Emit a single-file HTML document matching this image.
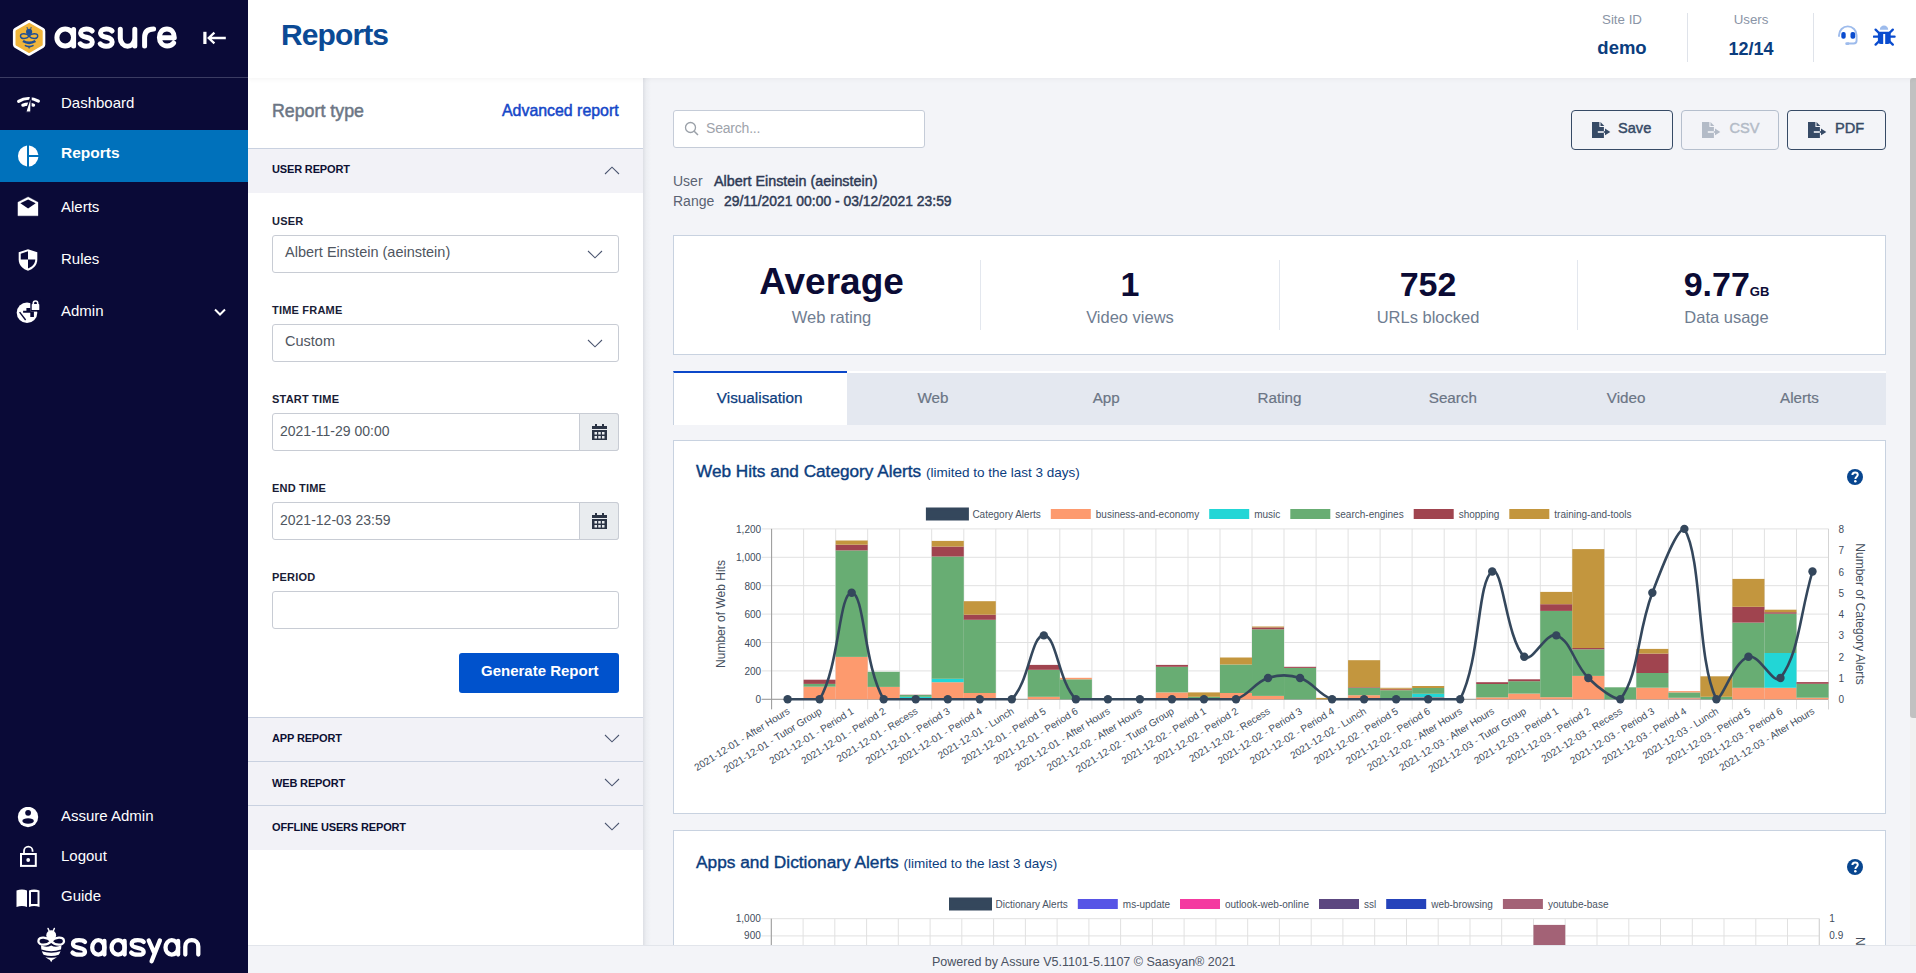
<!DOCTYPE html>
<html><head><meta charset="utf-8"><title>Reports</title>
<style>
*{box-sizing:border-box;margin:0;padding:0}
html,body{width:1916px;height:973px;overflow:hidden;background:#f3f4f8;font-family:"Liberation Sans",sans-serif;position:relative}
.a{position:absolute;white-space:nowrap}
#sb{position:absolute;left:0;top:0;width:248px;height:973px;background:#0a0a37}
.nav{position:absolute;left:0;width:248px;height:52px;color:#fff;font-size:15px}
.nav .t{position:absolute;left:61px;top:16px;line-height:18px}
.nav svg{position:absolute}
#hdr{position:absolute;left:248px;top:0;width:1668px;height:78px;background:#fff;box-shadow:0 1px 5px rgba(0,0,0,0.05)}
#lp{position:absolute;left:248px;top:78px;width:395px;height:867px;background:#fff}
#lpb{position:absolute;left:643px;top:78px;width:8px;height:867px;background:linear-gradient(to right,#dddfe5,#eceef2 40%,#f3f4f8)}
.acc{position:absolute;left:248px;width:395px;height:44px;background:#f2f2f7;border-top:1px solid #c9d1e0}
.acc .t{position:absolute;left:24px;top:13px;font-size:11px;font-weight:bold;color:#0d1033;line-height:14px;letter-spacing:-0.15px}
.lbl{position:absolute;left:272px;font-size:11px;font-weight:bold;color:#1a1d36;line-height:14px;letter-spacing:0.2px}
.inp{position:absolute;left:272px;width:347px;height:38px;background:#fff;border:1px solid #c8ccd4;border-radius:3px}
.inp .t{position:absolute;left:12px;top:8px;font-size:14.5px;color:#4f5661;line-height:17px}
.addon{position:absolute;right:-1px;top:-1px;width:40px;height:38px;background:#e9ecef;border:1px solid #c8ccd4;border-radius:0 3px 3px 0}
.btn{position:absolute;top:110px;height:40px;border:1.5px solid #364a66;border-radius:4px;background:#f3f4f8;color:#364a66;font-size:14.6px;-webkit-text-stroke:0.45px currentColor}
.btn .t{position:absolute;top:9px;line-height:17px}
.card{position:absolute;left:673px;width:1213px;background:#fff;border:1px solid #c8d2e0}
.sv{position:absolute;font-weight:bold;color:#0b0b35;text-align:center;line-height:40px}
.sl{position:absolute;font-size:16.5px;color:#6f7d91;text-align:center;line-height:20px}
.tab{position:absolute;top:373px;height:52px;width:173.3px;text-align:center;font-size:15.2px;color:#6b7585;line-height:18px;padding-top:16px;-webkit-text-stroke:0.2px #6b7585}
svg text.tk{font-family:"Liberation Sans",sans-serif;font-size:10px;fill:#414c5c}
svg text.at{font-family:"Liberation Sans",sans-serif;font-size:12px;fill:#454f5e}
svg text.lg{font-family:"Liberation Sans",sans-serif;font-size:10px;fill:#4a5464}
</style></head><body>

<!-- content area -->
<div class="a" style="left:646px;top:78px;width:1264px;height:867px;background:#f3f4f8"></div>

<!-- search -->
<div class="a" style="left:673px;top:110px;width:252px;height:38px;background:#fff;border:1px solid #c5ccd8;border-radius:3px">
 <svg class="a" style="left:10px;top:10px" width="16" height="16" viewBox="0 0 16 16"><circle cx="6.5" cy="6.5" r="5" fill="none" stroke="#9aa0a8" stroke-width="1.3"/><line x1="10.2" y1="10.2" x2="14" y2="14" stroke="#9aa0a8" stroke-width="1.5"/></svg>
 <div class="a" style="left:32px;top:9px;font-size:14px;color:#9ea3ab;line-height:17px;letter-spacing:-0.2px">Search...</div>
</div>

<!-- buttons -->
<div class="btn" style="left:1571px;width:102px">
 <svg class="a" style="left:19.5px;top:10.5px" width="20" height="17" viewBox="0 0 20 17"><path d="M0 0H7.4V5.1H11.9V15.9H0Z" fill="#364a66"/><path d="M8.5 0L12.3 3.9H8.5Z" fill="#364a66"/><rect x="5.8" y="9.2" width="6.1" height="1.6" fill="#f3f4f8"/><rect x="11.9" y="9.2" width="2.6" height="1.6" fill="#364a66"/><path d="M13 6.6L18.3 10L13 13.3Z" fill="#364a66"/></svg>
 <div class="t" style="left:46px">Save</div>
</div>
<div class="btn" style="left:1681px;width:98px;border-color:#b5bfcd;color:#b3bbc7">
 <svg class="a" style="left:19.5px;top:10.5px" width="20" height="17" viewBox="0 0 20 17"><path d="M0 0H7.4V5.1H11.9V15.9H0Z" fill="#b3bbc7"/><path d="M8.5 0L12.3 3.9H8.5Z" fill="#b3bbc7"/><rect x="5.8" y="9.2" width="6.1" height="1.6" fill="#f3f4f8"/><rect x="11.9" y="9.2" width="2.6" height="1.6" fill="#b3bbc7"/><path d="M13 6.6L18.3 10L13 13.3Z" fill="#b3bbc7"/></svg>
 <div class="t" style="left:47.5px">CSV</div>
</div>
<div class="btn" style="left:1787px;width:99px">
 <svg class="a" style="left:19.5px;top:10.5px" width="20" height="17" viewBox="0 0 20 17"><path d="M0 0H7.4V5.1H11.9V15.9H0Z" fill="#364a66"/><path d="M8.5 0L12.3 3.9H8.5Z" fill="#364a66"/><rect x="5.8" y="9.2" width="6.1" height="1.6" fill="#f3f4f8"/><rect x="11.9" y="9.2" width="2.6" height="1.6" fill="#364a66"/><path d="M13 6.6L18.3 10L13 13.3Z" fill="#364a66"/></svg>
 <div class="t" style="left:47px">PDF</div>
</div>

<!-- user / range -->
<div class="a" style="left:673px;top:173px;font-size:14px;color:#5a6272;line-height:17px">User</div>
<div class="a" style="left:714px;top:172.5px;font-size:14.35px;color:#2e3a55;line-height:17px;-webkit-text-stroke:0.45px #2e3a55">Albert Einstein (aeinstein)</div>
<div class="a" style="left:673px;top:193px;font-size:14px;color:#5a6272;line-height:17px">Range</div>
<div class="a" style="left:724px;top:193px;font-size:13.9px;color:#2e3a55;line-height:17px;-webkit-text-stroke:0.45px #2e3a55">29/11/2021 00:00 - 03/12/2021 23:59</div>

<!-- stats card -->
<div class="card" style="top:235px;height:120px"></div>
<div class="a" style="left:980px;top:260px;width:1px;height:70px;background:#e3e7ee"></div>
<div class="a" style="left:1279px;top:260px;width:1px;height:70px;background:#e3e7ee"></div>
<div class="a" style="left:1577px;top:260px;width:1px;height:70px;background:#e3e7ee"></div>
<div class="sv" style="left:682px;width:299px;top:262px;font-size:37px">Average</div>
<div class="sv" style="left:981px;width:298px;top:264px;font-size:34px">1</div>
<div class="sv" style="left:1279px;width:298px;top:264px;font-size:34px">752</div>
<div class="sv" style="left:1577px;width:299px;top:264px;font-size:34px">9.77<span style="font-size:13px;line-height:13px">GB</span></div>
<div class="sl" style="left:682px;width:299px;top:307px">Web rating</div>
<div class="sl" style="left:981px;width:298px;top:307px">Video views</div>
<div class="sl" style="left:1279px;width:298px;top:307px">URLs blocked</div>
<div class="sl" style="left:1577px;width:299px;top:307px">Data usage</div>

<!-- tabs -->
<div class="a" style="left:673px;top:371px;width:1213px;height:54px;background:#e4e8f0;border-top:2px solid #fff"></div>
<div class="a" style="left:673px;top:371px;width:174px;height:54px;background:#fff;border-top:2px solid #0b47c9;border-left:1px solid #c8d2e0"></div>
<div class="tab" style="left:673px;color:#0b3d7e;font-size:15.3px;-webkit-text-stroke:0.25px #0b3d7e">Visualisation</div>
<div class="tab" style="left:846.3px">Web</div>
<div class="tab" style="left:1019.6px">App</div>
<div class="tab" style="left:1192.9px">Rating</div>
<div class="tab" style="left:1366.2px">Search</div>
<div class="tab" style="left:1539.5px">Video</div>
<div class="tab" style="left:1712.8px">Alerts</div>

<!-- chart cards -->
<div class="card" style="top:440px;height:374px"></div>
<div class="card" style="top:830px;height:200px"></div>
<div class="a" style="left:696px;top:461px;font-size:17.2px;color:#0b3d7e;line-height:20px;-webkit-text-stroke:0.4px #0b3d7e">Web Hits and Category Alerts <span style="font-size:13.5px;-webkit-text-stroke:0">(limited to the last 3 days)</span></div>
<div class="a" style="left:696px;top:852px;font-size:17.3px;color:#0b3d7e;line-height:20px;-webkit-text-stroke:0.4px #0b3d7e">Apps and Dictionary Alerts <span style="font-size:13.5px;-webkit-text-stroke:0">(limited to the last 3 days)</span></div>
<svg class="a" style="left:1847px;top:469px" width="16" height="16" viewBox="0 0 16 16"><circle cx="8" cy="8" r="8" fill="#08468f"/><path d="M5.4 6.1C5.4 4.4 6.5 3.4 8.1 3.4C9.7 3.4 10.8 4.4 10.8 5.8C10.8 7.7 8.4 7.8 8.4 9.9" fill="none" stroke="#fff" stroke-width="2"/><circle cx="8.3" cy="12.3" r="1.25" fill="#fff"/></svg>
<svg class="a" style="left:1847px;top:859px" width="16" height="16" viewBox="0 0 16 16"><circle cx="8" cy="8" r="8" fill="#08468f"/><path d="M5.4 6.1C5.4 4.4 6.5 3.4 8.1 3.4C9.7 3.4 10.8 4.4 10.8 5.8C10.8 7.7 8.4 7.8 8.4 9.9" fill="none" stroke="#fff" stroke-width="2"/><circle cx="8.3" cy="12.3" r="1.25" fill="#fff"/></svg>

<svg class="a" style="left:0;top:0" width="1916" height="973" viewBox="0 0 1916 973">
<line x1="761.6" y1="699.3" x2="1828.5" y2="699.3" stroke="#e1e1e1" stroke-width="1"/>
<line x1="761.6" y1="670.9" x2="1828.5" y2="670.9" stroke="#e1e1e1" stroke-width="1"/>
<line x1="761.6" y1="642.5" x2="1828.5" y2="642.5" stroke="#e1e1e1" stroke-width="1"/>
<line x1="761.6" y1="614.1" x2="1828.5" y2="614.1" stroke="#e1e1e1" stroke-width="1"/>
<line x1="761.6" y1="585.7" x2="1828.5" y2="585.7" stroke="#e1e1e1" stroke-width="1"/>
<line x1="761.6" y1="557.3" x2="1828.5" y2="557.3" stroke="#e1e1e1" stroke-width="1"/>
<line x1="761.6" y1="528.9" x2="1828.5" y2="528.9" stroke="#e1e1e1" stroke-width="1"/>
<line x1="771.6" y1="528.9" x2="771.6" y2="709.3" stroke="#e1e1e1" stroke-width="1"/>
<line x1="803.6" y1="528.9" x2="803.6" y2="709.3" stroke="#e1e1e1" stroke-width="1"/>
<line x1="835.7" y1="528.9" x2="835.7" y2="709.3" stroke="#e1e1e1" stroke-width="1"/>
<line x1="867.7" y1="528.9" x2="867.7" y2="709.3" stroke="#e1e1e1" stroke-width="1"/>
<line x1="899.7" y1="528.9" x2="899.7" y2="709.3" stroke="#e1e1e1" stroke-width="1"/>
<line x1="931.7" y1="528.9" x2="931.7" y2="709.3" stroke="#e1e1e1" stroke-width="1"/>
<line x1="963.8" y1="528.9" x2="963.8" y2="709.3" stroke="#e1e1e1" stroke-width="1"/>
<line x1="995.8" y1="528.9" x2="995.8" y2="709.3" stroke="#e1e1e1" stroke-width="1"/>
<line x1="1027.8" y1="528.9" x2="1027.8" y2="709.3" stroke="#e1e1e1" stroke-width="1"/>
<line x1="1059.8" y1="528.9" x2="1059.8" y2="709.3" stroke="#e1e1e1" stroke-width="1"/>
<line x1="1091.9" y1="528.9" x2="1091.9" y2="709.3" stroke="#e1e1e1" stroke-width="1"/>
<line x1="1123.9" y1="528.9" x2="1123.9" y2="709.3" stroke="#e1e1e1" stroke-width="1"/>
<line x1="1155.9" y1="528.9" x2="1155.9" y2="709.3" stroke="#e1e1e1" stroke-width="1"/>
<line x1="1188.0" y1="528.9" x2="1188.0" y2="709.3" stroke="#e1e1e1" stroke-width="1"/>
<line x1="1220.0" y1="528.9" x2="1220.0" y2="709.3" stroke="#e1e1e1" stroke-width="1"/>
<line x1="1252.0" y1="528.9" x2="1252.0" y2="709.3" stroke="#e1e1e1" stroke-width="1"/>
<line x1="1284.0" y1="528.9" x2="1284.0" y2="709.3" stroke="#e1e1e1" stroke-width="1"/>
<line x1="1316.1" y1="528.9" x2="1316.1" y2="709.3" stroke="#e1e1e1" stroke-width="1"/>
<line x1="1348.1" y1="528.9" x2="1348.1" y2="709.3" stroke="#e1e1e1" stroke-width="1"/>
<line x1="1380.1" y1="528.9" x2="1380.1" y2="709.3" stroke="#e1e1e1" stroke-width="1"/>
<line x1="1412.1" y1="528.9" x2="1412.1" y2="709.3" stroke="#e1e1e1" stroke-width="1"/>
<line x1="1444.2" y1="528.9" x2="1444.2" y2="709.3" stroke="#e1e1e1" stroke-width="1"/>
<line x1="1476.2" y1="528.9" x2="1476.2" y2="709.3" stroke="#e1e1e1" stroke-width="1"/>
<line x1="1508.2" y1="528.9" x2="1508.2" y2="709.3" stroke="#e1e1e1" stroke-width="1"/>
<line x1="1540.3" y1="528.9" x2="1540.3" y2="709.3" stroke="#e1e1e1" stroke-width="1"/>
<line x1="1572.3" y1="528.9" x2="1572.3" y2="709.3" stroke="#e1e1e1" stroke-width="1"/>
<line x1="1604.3" y1="528.9" x2="1604.3" y2="709.3" stroke="#e1e1e1" stroke-width="1"/>
<line x1="1636.3" y1="528.9" x2="1636.3" y2="709.3" stroke="#e1e1e1" stroke-width="1"/>
<line x1="1668.4" y1="528.9" x2="1668.4" y2="709.3" stroke="#e1e1e1" stroke-width="1"/>
<line x1="1700.4" y1="528.9" x2="1700.4" y2="709.3" stroke="#e1e1e1" stroke-width="1"/>
<line x1="1732.4" y1="528.9" x2="1732.4" y2="709.3" stroke="#e1e1e1" stroke-width="1"/>
<line x1="1764.4" y1="528.9" x2="1764.4" y2="709.3" stroke="#e1e1e1" stroke-width="1"/>
<line x1="1796.5" y1="528.9" x2="1796.5" y2="709.3" stroke="#e1e1e1" stroke-width="1"/>
<line x1="1828.5" y1="528.9" x2="1828.5" y2="709.3" stroke="#e1e1e1" stroke-width="1"/>
<line x1="771.6" y1="528.9" x2="771.6" y2="709.3" stroke="#9a9a9a" stroke-width="1"/>
<line x1="761.6" y1="699.3" x2="1828.5" y2="699.3" stroke="#9a9a9a" stroke-width="1"/>
<line x1="1828.5" y1="528.9" x2="1828.5" y2="709.3" stroke="#d5d5d5" stroke-width="1"/>
<rect x="803.63" y="686.70" width="32.03" height="12.60" fill="#fd9a6e"/>
<rect x="803.63" y="683.90" width="32.03" height="2.80" fill="#68ad73"/>
<rect x="803.63" y="679.70" width="32.03" height="4.20" fill="#a0444f"/>
<rect x="835.65" y="656.90" width="32.03" height="42.40" fill="#fd9a6e"/>
<rect x="835.65" y="550.40" width="32.03" height="106.50" fill="#68ad73"/>
<rect x="835.65" y="544.70" width="32.03" height="5.70" fill="#a0444f"/>
<rect x="835.65" y="540.50" width="32.03" height="4.20" fill="#c3963e"/>
<rect x="867.68" y="686.90" width="32.03" height="12.40" fill="#fd9a6e"/>
<rect x="867.68" y="671.80" width="32.03" height="15.10" fill="#68ad73"/>
<rect x="899.71" y="696.80" width="32.03" height="2.50" fill="#22d6d6"/>
<rect x="899.71" y="694.80" width="32.03" height="2.00" fill="#68ad73"/>
<rect x="899.71" y="694.30" width="32.03" height="0.50" fill="#e9b5c0"/>
<rect x="931.74" y="682.20" width="32.03" height="17.10" fill="#fd9a6e"/>
<rect x="931.74" y="678.80" width="32.03" height="3.40" fill="#22d6d6"/>
<rect x="931.74" y="556.50" width="32.03" height="122.30" fill="#68ad73"/>
<rect x="931.74" y="546.60" width="32.03" height="9.90" fill="#a0444f"/>
<rect x="931.74" y="540.90" width="32.03" height="5.70" fill="#c3963e"/>
<rect x="963.76" y="693.00" width="32.03" height="6.30" fill="#fd9a6e"/>
<rect x="963.76" y="619.80" width="32.03" height="73.20" fill="#68ad73"/>
<rect x="963.76" y="614.70" width="32.03" height="5.10" fill="#a0444f"/>
<rect x="963.76" y="601.20" width="32.03" height="13.50" fill="#c3963e"/>
<rect x="1027.82" y="696.80" width="32.03" height="2.50" fill="#fd9a6e"/>
<rect x="1027.82" y="669.80" width="32.03" height="27.00" fill="#68ad73"/>
<rect x="1027.82" y="664.90" width="32.03" height="4.90" fill="#a0444f"/>
<rect x="1059.85" y="679.30" width="32.03" height="20.00" fill="#68ad73"/>
<rect x="1059.85" y="677.80" width="32.03" height="1.50" fill="#fd9a6e"/>
<rect x="1155.93" y="692.40" width="32.03" height="6.90" fill="#fd9a6e"/>
<rect x="1155.93" y="666.80" width="32.03" height="25.60" fill="#68ad73"/>
<rect x="1155.93" y="664.90" width="32.03" height="1.90" fill="#a0444f"/>
<rect x="1187.95" y="696.80" width="32.03" height="2.50" fill="#68ad73"/>
<rect x="1187.95" y="692.40" width="32.03" height="4.40" fill="#c3963e"/>
<rect x="1219.98" y="693.00" width="32.03" height="6.30" fill="#fd9a6e"/>
<rect x="1219.98" y="664.50" width="32.03" height="28.50" fill="#68ad73"/>
<rect x="1219.98" y="657.50" width="32.03" height="7.00" fill="#c3963e"/>
<rect x="1252.01" y="695.90" width="32.03" height="3.40" fill="#fd9a6e"/>
<rect x="1252.01" y="629.30" width="32.03" height="66.60" fill="#68ad73"/>
<rect x="1252.01" y="627.40" width="32.03" height="1.90" fill="#a0444f"/>
<rect x="1252.01" y="626.50" width="32.03" height="0.90" fill="#c3963e"/>
<rect x="1284.04" y="667.90" width="32.03" height="31.40" fill="#68ad73"/>
<rect x="1284.04" y="666.80" width="32.03" height="1.10" fill="#a0444f"/>
<rect x="1316.06" y="697.90" width="32.03" height="1.40" fill="#c3963e"/>
<rect x="1348.09" y="695.20" width="32.03" height="4.10" fill="#fd9a6e"/>
<rect x="1348.09" y="688.00" width="32.03" height="7.20" fill="#68ad73"/>
<rect x="1348.09" y="687.30" width="32.03" height="0.70" fill="#a0444f"/>
<rect x="1348.09" y="660.20" width="32.03" height="27.10" fill="#c3963e"/>
<rect x="1380.12" y="690.20" width="32.03" height="9.10" fill="#68ad73"/>
<rect x="1380.12" y="688.70" width="32.03" height="1.50" fill="#c0745a"/>
<rect x="1380.12" y="687.80" width="32.03" height="0.90" fill="#c3963e"/>
<rect x="1412.15" y="697.30" width="32.03" height="2.00" fill="#a0444f"/>
<rect x="1412.15" y="693.80" width="32.03" height="3.50" fill="#22d6d6"/>
<rect x="1412.15" y="688.00" width="32.03" height="5.80" fill="#68ad73"/>
<rect x="1412.15" y="686.00" width="32.03" height="2.00" fill="#c3963e"/>
<rect x="1476.20" y="697.40" width="32.03" height="1.90" fill="#fd9a6e"/>
<rect x="1476.20" y="684.00" width="32.03" height="13.40" fill="#68ad73"/>
<rect x="1476.20" y="682.20" width="32.03" height="1.80" fill="#a0444f"/>
<rect x="1508.23" y="693.60" width="32.03" height="5.70" fill="#fd9a6e"/>
<rect x="1508.23" y="681.20" width="32.03" height="12.40" fill="#68ad73"/>
<rect x="1508.23" y="679.30" width="32.03" height="1.90" fill="#a0444f"/>
<rect x="1540.25" y="697.20" width="32.03" height="2.10" fill="#fd9a6e"/>
<rect x="1540.25" y="610.90" width="32.03" height="86.30" fill="#68ad73"/>
<rect x="1540.25" y="604.20" width="32.03" height="6.70" fill="#a0444f"/>
<rect x="1540.25" y="591.90" width="32.03" height="12.30" fill="#c3963e"/>
<rect x="1572.28" y="675.90" width="32.03" height="23.40" fill="#fd9a6e"/>
<rect x="1572.28" y="649.30" width="32.03" height="26.60" fill="#68ad73"/>
<rect x="1572.28" y="648.00" width="32.03" height="1.30" fill="#a0444f"/>
<rect x="1572.28" y="549.10" width="32.03" height="98.90" fill="#c3963e"/>
<rect x="1604.31" y="687.30" width="32.03" height="12.00" fill="#68ad73"/>
<rect x="1636.34" y="687.70" width="32.03" height="11.60" fill="#fd9a6e"/>
<rect x="1636.34" y="673.00" width="32.03" height="14.70" fill="#68ad73"/>
<rect x="1636.34" y="653.60" width="32.03" height="19.40" fill="#a0444f"/>
<rect x="1636.34" y="648.90" width="32.03" height="4.70" fill="#c3963e"/>
<rect x="1668.36" y="697.80" width="32.03" height="1.50" fill="#e3a08c"/>
<rect x="1668.36" y="692.40" width="32.03" height="5.40" fill="#68ad73"/>
<rect x="1668.36" y="691.10" width="32.03" height="1.30" fill="#fd9a6e"/>
<rect x="1700.39" y="696.80" width="32.03" height="2.50" fill="#68ad73"/>
<rect x="1700.39" y="676.30" width="32.03" height="20.50" fill="#c3963e"/>
<rect x="1732.42" y="687.80" width="32.03" height="11.50" fill="#fd9a6e"/>
<rect x="1732.42" y="622.60" width="32.03" height="65.20" fill="#68ad73"/>
<rect x="1732.42" y="606.80" width="32.03" height="15.80" fill="#a0444f"/>
<rect x="1732.42" y="578.90" width="32.03" height="27.90" fill="#c3963e"/>
<rect x="1764.45" y="687.80" width="32.03" height="11.50" fill="#fd9a6e"/>
<rect x="1764.45" y="653.00" width="32.03" height="34.80" fill="#22d6d6"/>
<rect x="1764.45" y="613.70" width="32.03" height="39.30" fill="#68ad73"/>
<rect x="1764.45" y="612.20" width="32.03" height="1.50" fill="#a0444f"/>
<rect x="1764.45" y="609.70" width="32.03" height="2.50" fill="#c3963e"/>
<rect x="1796.47" y="697.70" width="32.03" height="1.60" fill="#fd9a6e"/>
<rect x="1796.47" y="683.80" width="32.03" height="13.90" fill="#68ad73"/>
<rect x="1796.47" y="682.10" width="32.03" height="1.70" fill="#a0444f"/>
<path d="M787.61,699.30 C800.42,699.30 813.91,699.30 819.64,699.30 C839.53,666.23 838.86,592.80 851.67,592.80 C864.48,592.80 863.80,666.23 883.70,699.30 C889.42,699.30 902.91,699.30 915.72,699.30 C928.53,699.30 934.94,699.30 947.75,699.30 C960.56,699.30 966.97,699.30 979.78,699.30 C992.59,699.30 1003.88,699.30 1011.80,699.30 C1029.50,681.65 1031.02,635.40 1043.83,635.40 C1056.64,635.40 1058.17,681.65 1075.86,699.30 C1083.79,699.30 1095.08,699.30 1107.89,699.30 C1120.70,699.30 1127.10,699.30 1139.91,699.30 C1152.72,699.30 1159.13,699.30 1171.94,699.30 C1184.75,699.30 1191.16,699.30 1203.97,699.30 C1216.78,699.30 1224.35,699.30 1236.00,699.30 C1249.98,694.65 1254.04,682.65 1268.02,678.00 C1279.66,674.13 1288.41,674.13 1300.05,678.00 C1314.03,682.65 1318.10,694.65 1332.08,699.30 C1343.72,699.30 1351.29,699.30 1364.10,699.30 C1376.92,699.30 1383.32,699.30 1396.13,699.30 C1408.94,699.30 1415.35,699.30 1428.16,699.30 C1440.97,699.30 1455.18,699.30 1460.19,699.30 C1480.80,658.18 1477.06,581.58 1492.21,571.50 C1502.68,564.54 1506.23,638.73 1524.24,656.70 C1531.85,664.29 1545.53,631.83 1556.27,635.40 C1571.15,640.35 1573.41,663.15 1588.30,678.00 C1599.04,688.71 1613.74,699.30 1620.32,699.30 C1639.36,673.98 1636.75,634.29 1652.35,592.80 C1662.37,566.13 1676.90,528.90 1684.38,528.90 C1702.52,559.06 1696.81,660.20 1716.40,699.30 C1722.43,699.30 1733.55,661.65 1748.43,656.70 C1759.17,653.13 1773.87,686.76 1780.46,678.00 C1799.50,652.68 1799.68,614.10 1812.49,571.50" fill="none" stroke="#34475c" stroke-width="2.6"/>
<circle cx="787.61" cy="699.30" r="4.2" fill="#34475c"/>
<circle cx="819.64" cy="699.30" r="4.2" fill="#34475c"/>
<circle cx="851.67" cy="592.80" r="4.2" fill="#34475c"/>
<circle cx="883.70" cy="699.30" r="4.2" fill="#34475c"/>
<circle cx="915.72" cy="699.30" r="4.2" fill="#34475c"/>
<circle cx="947.75" cy="699.30" r="4.2" fill="#34475c"/>
<circle cx="979.78" cy="699.30" r="4.2" fill="#34475c"/>
<circle cx="1011.80" cy="699.30" r="4.2" fill="#34475c"/>
<circle cx="1043.83" cy="635.40" r="4.2" fill="#34475c"/>
<circle cx="1075.86" cy="699.30" r="4.2" fill="#34475c"/>
<circle cx="1107.89" cy="699.30" r="4.2" fill="#34475c"/>
<circle cx="1139.91" cy="699.30" r="4.2" fill="#34475c"/>
<circle cx="1171.94" cy="699.30" r="4.2" fill="#34475c"/>
<circle cx="1203.97" cy="699.30" r="4.2" fill="#34475c"/>
<circle cx="1236.00" cy="699.30" r="4.2" fill="#34475c"/>
<circle cx="1268.02" cy="678.00" r="4.2" fill="#34475c"/>
<circle cx="1300.05" cy="678.00" r="4.2" fill="#34475c"/>
<circle cx="1332.08" cy="699.30" r="4.2" fill="#34475c"/>
<circle cx="1364.10" cy="699.30" r="4.2" fill="#34475c"/>
<circle cx="1396.13" cy="699.30" r="4.2" fill="#34475c"/>
<circle cx="1428.16" cy="699.30" r="4.2" fill="#34475c"/>
<circle cx="1460.19" cy="699.30" r="4.2" fill="#34475c"/>
<circle cx="1492.21" cy="571.50" r="4.2" fill="#34475c"/>
<circle cx="1524.24" cy="656.70" r="4.2" fill="#34475c"/>
<circle cx="1556.27" cy="635.40" r="4.2" fill="#34475c"/>
<circle cx="1588.30" cy="678.00" r="4.2" fill="#34475c"/>
<circle cx="1620.32" cy="699.30" r="4.2" fill="#34475c"/>
<circle cx="1652.35" cy="592.80" r="4.2" fill="#34475c"/>
<circle cx="1684.38" cy="528.90" r="4.2" fill="#34475c"/>
<circle cx="1716.40" cy="699.30" r="4.2" fill="#34475c"/>
<circle cx="1748.43" cy="656.70" r="4.2" fill="#34475c"/>
<circle cx="1780.46" cy="678.00" r="4.2" fill="#34475c"/>
<circle cx="1812.49" cy="571.50" r="4.2" fill="#34475c"/>
<text x="761.1" y="703.3" text-anchor="end" class="tk">0</text>
<text x="761.1" y="674.9" text-anchor="end" class="tk">200</text>
<text x="761.1" y="646.5" text-anchor="end" class="tk">400</text>
<text x="761.1" y="618.1" text-anchor="end" class="tk">600</text>
<text x="761.1" y="589.7" text-anchor="end" class="tk">800</text>
<text x="761.1" y="561.3" text-anchor="end" class="tk">1,000</text>
<text x="761.1" y="532.9" text-anchor="end" class="tk">1,200</text>
<text x="1838.5" y="703.3" class="tk">0</text>
<text x="1838.5" y="682.0" class="tk">1</text>
<text x="1838.5" y="660.7" class="tk">2</text>
<text x="1838.5" y="639.4" class="tk">3</text>
<text x="1838.5" y="618.1" class="tk">4</text>
<text x="1838.5" y="596.8" class="tk">5</text>
<text x="1838.5" y="575.5" class="tk">6</text>
<text x="1838.5" y="554.2" class="tk">7</text>
<text x="1838.5" y="532.9" class="tk">8</text>
<text transform="translate(725,614) rotate(-90)" text-anchor="middle" class="at">Number of Web Hits</text>
<text transform="translate(1856,614) rotate(90)" text-anchor="middle" class="at">Number of Category Alerts</text>
<text transform="translate(788.6,710) rotate(-32)" text-anchor="end" dy="3.5" class="tk">2021-12-01 - After Hours</text>
<text transform="translate(820.6,710) rotate(-32)" text-anchor="end" dy="3.5" class="tk">2021-12-01 - Tutor Group</text>
<text transform="translate(852.7,710) rotate(-32)" text-anchor="end" dy="3.5" class="tk">2021-12-01 - Period 1</text>
<text transform="translate(884.7,710) rotate(-32)" text-anchor="end" dy="3.5" class="tk">2021-12-01 - Period 2</text>
<text transform="translate(916.7,710) rotate(-32)" text-anchor="end" dy="3.5" class="tk">2021-12-01 - Recess</text>
<text transform="translate(948.8,710) rotate(-32)" text-anchor="end" dy="3.5" class="tk">2021-12-01 - Period 3</text>
<text transform="translate(980.8,710) rotate(-32)" text-anchor="end" dy="3.5" class="tk">2021-12-01 - Period 4</text>
<text transform="translate(1012.8,710) rotate(-32)" text-anchor="end" dy="3.5" class="tk">2021-12-01 - Lunch</text>
<text transform="translate(1044.8,710) rotate(-32)" text-anchor="end" dy="3.5" class="tk">2021-12-01 - Period 5</text>
<text transform="translate(1076.9,710) rotate(-32)" text-anchor="end" dy="3.5" class="tk">2021-12-01 - Period 6</text>
<text transform="translate(1108.9,710) rotate(-32)" text-anchor="end" dy="3.5" class="tk">2021-12-01 - After Hours</text>
<text transform="translate(1140.9,710) rotate(-32)" text-anchor="end" dy="3.5" class="tk">2021-12-02 - After Hours</text>
<text transform="translate(1172.9,710) rotate(-32)" text-anchor="end" dy="3.5" class="tk">2021-12-02 - Tutor Group</text>
<text transform="translate(1205.0,710) rotate(-32)" text-anchor="end" dy="3.5" class="tk">2021-12-02 - Period 1</text>
<text transform="translate(1237.0,710) rotate(-32)" text-anchor="end" dy="3.5" class="tk">2021-12-02 - Period 2</text>
<text transform="translate(1269.0,710) rotate(-32)" text-anchor="end" dy="3.5" class="tk">2021-12-02 - Recess</text>
<text transform="translate(1301.1,710) rotate(-32)" text-anchor="end" dy="3.5" class="tk">2021-12-02 - Period 3</text>
<text transform="translate(1333.1,710) rotate(-32)" text-anchor="end" dy="3.5" class="tk">2021-12-02 - Period 4</text>
<text transform="translate(1365.1,710) rotate(-32)" text-anchor="end" dy="3.5" class="tk">2021-12-02 - Lunch</text>
<text transform="translate(1397.1,710) rotate(-32)" text-anchor="end" dy="3.5" class="tk">2021-12-02 - Period 5</text>
<text transform="translate(1429.2,710) rotate(-32)" text-anchor="end" dy="3.5" class="tk">2021-12-02 - Period 6</text>
<text transform="translate(1461.2,710) rotate(-32)" text-anchor="end" dy="3.5" class="tk">2021-12-02 - After Hours</text>
<text transform="translate(1493.2,710) rotate(-32)" text-anchor="end" dy="3.5" class="tk">2021-12-03 - After Hours</text>
<text transform="translate(1525.2,710) rotate(-32)" text-anchor="end" dy="3.5" class="tk">2021-12-03 - Tutor Group</text>
<text transform="translate(1557.3,710) rotate(-32)" text-anchor="end" dy="3.5" class="tk">2021-12-03 - Period 1</text>
<text transform="translate(1589.3,710) rotate(-32)" text-anchor="end" dy="3.5" class="tk">2021-12-03 - Period 2</text>
<text transform="translate(1621.3,710) rotate(-32)" text-anchor="end" dy="3.5" class="tk">2021-12-03 - Recess</text>
<text transform="translate(1653.4,710) rotate(-32)" text-anchor="end" dy="3.5" class="tk">2021-12-03 - Period 3</text>
<text transform="translate(1685.4,710) rotate(-32)" text-anchor="end" dy="3.5" class="tk">2021-12-03 - Period 4</text>
<text transform="translate(1717.4,710) rotate(-32)" text-anchor="end" dy="3.5" class="tk">2021-12-03 - Lunch</text>
<text transform="translate(1749.4,710) rotate(-32)" text-anchor="end" dy="3.5" class="tk">2021-12-03 - Period 5</text>
<text transform="translate(1781.5,710) rotate(-32)" text-anchor="end" dy="3.5" class="tk">2021-12-03 - Period 6</text>
<text transform="translate(1813.5,710) rotate(-32)" text-anchor="end" dy="3.5" class="tk">2021-12-03 - After Hours</text>
<rect x="927.4" y="509" width="40" height="10" fill="#34475c" stroke="#34475c" stroke-width="3"/>
<text x="972.4" y="517.5" class="lg">Category Alerts</text>
<rect x="1050.8" y="509" width="40" height="10" fill="#fd9a6e"/>
<text x="1095.8" y="517.5" class="lg">business-and-economy</text>
<rect x="1209.2" y="509" width="40" height="10" fill="#22d6d6"/>
<text x="1254.2" y="517.5" class="lg">music</text>
<rect x="1290.3" y="509" width="40" height="10" fill="#68ad73"/>
<text x="1335.3" y="517.5" class="lg">search-engines</text>
<rect x="1413.7" y="509" width="40" height="10" fill="#a0444f"/>
<text x="1458.7" y="517.5" class="lg">shopping</text>
<rect x="1509.3" y="509" width="40" height="10" fill="#c3963e"/>
<text x="1554.3" y="517.5" class="lg">training-and-tools</text>
<line x1="761.3" y1="918.7" x2="1819.3" y2="918.7" stroke="#e1e1e1"/>
<line x1="761.3" y1="935.9" x2="1819.3" y2="935.9" stroke="#e1e1e1"/>
<line x1="761.3" y1="953.1" x2="1819.3" y2="953.1" stroke="#e1e1e1"/>
<line x1="761.3" y1="970.3" x2="1819.3" y2="970.3" stroke="#e1e1e1"/>
<line x1="771.3" y1="918.7" x2="771.3" y2="980" stroke="#e1e1e1"/>
<line x1="803.1" y1="918.7" x2="803.1" y2="980" stroke="#e1e1e1"/>
<line x1="834.8" y1="918.7" x2="834.8" y2="980" stroke="#e1e1e1"/>
<line x1="866.6" y1="918.7" x2="866.6" y2="980" stroke="#e1e1e1"/>
<line x1="898.3" y1="918.7" x2="898.3" y2="980" stroke="#e1e1e1"/>
<line x1="930.1" y1="918.7" x2="930.1" y2="980" stroke="#e1e1e1"/>
<line x1="961.8" y1="918.7" x2="961.8" y2="980" stroke="#e1e1e1"/>
<line x1="993.6" y1="918.7" x2="993.6" y2="980" stroke="#e1e1e1"/>
<line x1="1025.4" y1="918.7" x2="1025.4" y2="980" stroke="#e1e1e1"/>
<line x1="1057.1" y1="918.7" x2="1057.1" y2="980" stroke="#e1e1e1"/>
<line x1="1088.9" y1="918.7" x2="1088.9" y2="980" stroke="#e1e1e1"/>
<line x1="1120.6" y1="918.7" x2="1120.6" y2="980" stroke="#e1e1e1"/>
<line x1="1152.4" y1="918.7" x2="1152.4" y2="980" stroke="#e1e1e1"/>
<line x1="1184.1" y1="918.7" x2="1184.1" y2="980" stroke="#e1e1e1"/>
<line x1="1215.9" y1="918.7" x2="1215.9" y2="980" stroke="#e1e1e1"/>
<line x1="1247.7" y1="918.7" x2="1247.7" y2="980" stroke="#e1e1e1"/>
<line x1="1279.4" y1="918.7" x2="1279.4" y2="980" stroke="#e1e1e1"/>
<line x1="1311.2" y1="918.7" x2="1311.2" y2="980" stroke="#e1e1e1"/>
<line x1="1342.9" y1="918.7" x2="1342.9" y2="980" stroke="#e1e1e1"/>
<line x1="1374.7" y1="918.7" x2="1374.7" y2="980" stroke="#e1e1e1"/>
<line x1="1406.5" y1="918.7" x2="1406.5" y2="980" stroke="#e1e1e1"/>
<line x1="1438.2" y1="918.7" x2="1438.2" y2="980" stroke="#e1e1e1"/>
<line x1="1470.0" y1="918.7" x2="1470.0" y2="980" stroke="#e1e1e1"/>
<line x1="1501.7" y1="918.7" x2="1501.7" y2="980" stroke="#e1e1e1"/>
<line x1="1533.5" y1="918.7" x2="1533.5" y2="980" stroke="#e1e1e1"/>
<line x1="1565.2" y1="918.7" x2="1565.2" y2="980" stroke="#e1e1e1"/>
<line x1="1597.0" y1="918.7" x2="1597.0" y2="980" stroke="#e1e1e1"/>
<line x1="1628.8" y1="918.7" x2="1628.8" y2="980" stroke="#e1e1e1"/>
<line x1="1660.5" y1="918.7" x2="1660.5" y2="980" stroke="#e1e1e1"/>
<line x1="1692.3" y1="918.7" x2="1692.3" y2="980" stroke="#e1e1e1"/>
<line x1="1724.0" y1="918.7" x2="1724.0" y2="980" stroke="#e1e1e1"/>
<line x1="1755.8" y1="918.7" x2="1755.8" y2="980" stroke="#e1e1e1"/>
<line x1="1787.5" y1="918.7" x2="1787.5" y2="980" stroke="#e1e1e1"/>
<line x1="1819.3" y1="918.7" x2="1819.3" y2="980" stroke="#e1e1e1"/>
<line x1="771.3" y1="918.7" x2="771.3" y2="980" stroke="#9a9a9a"/>
<line x1="1819.3" y1="918.7" x2="1819.3" y2="980" stroke="#d5d5d5"/>
<rect x="1533.48" y="924.9" width="31.76" height="60" fill="#a36276"/>
<text x="760.8" y="922.2" text-anchor="end" class="tk">1,000</text>
<text x="760.8" y="939.4000000000001" text-anchor="end" class="tk">900</text>
<text x="1829.3" y="922.2" class="tk">1</text>
<text x="1829.3" y="939.4000000000001" class="tk">0.9</text>
<text transform="translate(1856,1010) rotate(90)" text-anchor="middle" class="at">Number of Dictionary Alerts</text>
<rect x="950.5" y="899" width="40" height="10" fill="#34475c" stroke="#34475c" stroke-width="3"/>
<text x="995.5" y="907.5" class="lg">Dictionary Alerts</text>
<rect x="1077.8" y="899" width="40" height="10" fill="#5754e6"/>
<text x="1122.8" y="907.5" class="lg">ms-update</text>
<rect x="1180.0" y="899" width="40" height="10" fill="#f43aa0"/>
<text x="1225.0" y="907.5" class="lg">outlook-web-online</text>
<rect x="1319.0" y="899" width="40" height="10" fill="#5c4780"/>
<text x="1364.0" y="907.5" class="lg">ssl</text>
<rect x="1386.2" y="899" width="40" height="10" fill="#2543bb"/>
<text x="1431.2" y="907.5" class="lg">web-browsing</text>
<rect x="1502.9" y="899" width="40" height="10" fill="#a36276"/>
<text x="1547.9" y="907.5" class="lg">youtube-base</text>
</svg>

<!-- scrollbar -->
<div class="a" style="left:1910px;top:78px;width:6px;height:867px;background:#f1f1f1"></div>
<div class="a" style="left:1910px;top:78px;width:6px;height:640px;background:#c1c1c1;border-radius:3px 0 0 3px"></div>

<!-- footer -->
<div class="a" style="left:248px;top:945px;width:1668px;height:28px;background:#f3f4f8;border-top:1px solid #e2e5eb"></div>
<div class="a" style="left:932px;top:955px;font-size:12.5px;color:#4a5262;line-height:15px">Powered by Assure V5.1101-5.1107 © Saasyan® 2021</div>

<!-- left panel -->
<div id="lp"></div>
<div id="lpb"></div>
<div class="a" style="left:272px;top:101px;font-size:17.8px;color:#6c7684;line-height:20px;-webkit-text-stroke:0.5px #6c7684">Report type</div>
<div class="a" style="left:502px;top:102px;font-size:15.9px;color:#1547c8;line-height:18px;-webkit-text-stroke:0.5px #1547c8">Advanced report</div>
<div class="acc" style="top:148px;height:45px"><div class="t">USER REPORT</div>
 <svg class="a" style="left:356px;top:17px" width="16" height="9" viewBox="0 0 16 9"><path d="M1 8L8 1.2L15 8" fill="none" stroke="#4b5670" stroke-width="1.05"/></svg></div>
<div class="lbl" style="top:214px">USER</div>
<div class="inp" style="top:235px"><div class="t">Albert Einstein (aeinstein)</div>
 <svg class="a" style="left:314px;top:14px" width="16" height="9" viewBox="0 0 16 9"><path d="M1 1L8 7.8L15 1" fill="none" stroke="#4b5670" stroke-width="1.05"/></svg></div>
<div class="lbl" style="top:303px">TIME FRAME</div>
<div class="inp" style="top:324px"><div class="t">Custom</div>
 <svg class="a" style="left:314px;top:14px" width="16" height="9" viewBox="0 0 16 9"><path d="M1 1L8 7.8L15 1" fill="none" stroke="#4b5670" stroke-width="1.05"/></svg></div>
<div class="lbl" style="top:392px">START TIME</div>
<div class="inp" style="top:413px"><div class="t" style="left:7px;top:8.5px;font-size:14px">2021-11-29 00:00</div><div class="addon">
 <svg class="a" style="left:12px;top:10px" width="15" height="16" viewBox="0 0 15 16"><path d="M3 0h2v2h5v-2h2v2h3v3h-15v-3h3z M0 6h15v10h-15z" fill="#2b3445"/><path d="M2.5 8h2.5v2.5h-2.5zM6.25 8h2.5v2.5h-2.5zM10 8h2.5v2.5h-2.5zM2.5 12h2.5v2.5h-2.5zM6.25 12h2.5v2.5h-2.5zM10 12h2.5v2.5h-2.5z" fill="#e9ecef"/></svg></div></div>
<div class="lbl" style="top:481px">END TIME</div>
<div class="inp" style="top:502px"><div class="t" style="left:7px;top:8.5px;font-size:14px">2021-12-03 23:59</div><div class="addon">
 <svg class="a" style="left:12px;top:10px" width="15" height="16" viewBox="0 0 15 16"><path d="M3 0h2v2h5v-2h2v2h3v3h-15v-3h3z M0 6h15v10h-15z" fill="#2b3445"/><path d="M2.5 8h2.5v2.5h-2.5zM6.25 8h2.5v2.5h-2.5zM10 8h2.5v2.5h-2.5zM2.5 12h2.5v2.5h-2.5zM6.25 12h2.5v2.5h-2.5zM10 12h2.5v2.5h-2.5z" fill="#e9ecef"/></svg></div></div>
<div class="lbl" style="top:570px">PERIOD</div>
<div class="inp" style="top:591px"></div>
<div class="a" style="left:459px;top:653px;width:160px;height:40px;background:#0052cc;border-radius:3px"></div>
<div class="a" style="left:481px;top:662px;font-size:15px;font-weight:bold;color:#fff;line-height:18px">Generate Report</div>
<div class="acc" style="top:717px"><div class="t">APP REPORT</div>
 <svg class="a" style="left:356px;top:16px" width="16" height="9" viewBox="0 0 16 9"><path d="M1 1L8 7.8L15 1" fill="none" stroke="#4b5670" stroke-width="1.05"/></svg></div>
<div class="acc" style="top:761px"><div class="t" style="top:14px">WEB REPORT</div>
 <svg class="a" style="left:356px;top:16px" width="16" height="9" viewBox="0 0 16 9"><path d="M1 1L8 7.8L15 1" fill="none" stroke="#4b5670" stroke-width="1.05"/></svg></div>
<div class="acc" style="top:805px;height:45px"><div class="t" style="top:14px">OFFLINE USERS REPORT</div>
 <svg class="a" style="left:356px;top:16px" width="16" height="9" viewBox="0 0 16 9"><path d="M1 1L8 7.8L15 1" fill="none" stroke="#4b5670" stroke-width="1.05"/></svg></div>

<!-- header -->
<div id="hdr"></div>
<div class="a" style="left:281px;top:18px;font-size:30px;font-weight:bold;color:#0b4a95;line-height:34px;letter-spacing:-0.9px">Reports</div>
<div class="a" style="left:1582px;top:12px;width:80px;text-align:center;font-size:13.3px;color:#8a94a6;line-height:16px">Site ID</div>
<div class="a" style="left:1582px;top:37px;width:80px;text-align:center;font-size:18.5px;font-weight:bold;color:#0b3d7e;line-height:22px">demo</div>
<div class="a" style="left:1687px;top:13px;width:1px;height:49px;background:#dfe3ea"></div>
<div class="a" style="left:1711px;top:12px;width:80px;text-align:center;font-size:13.3px;color:#8a94a6;line-height:16px">Users</div>
<div class="a" style="left:1711px;top:38px;width:80px;text-align:center;font-size:18px;font-weight:bold;color:#0b3d7e;line-height:22px">12/14</div>
<div class="a" style="left:1813px;top:13px;width:1px;height:49px;background:#dfe3ea"></div>
<svg class="a" style="left:1838px;top:25px" width="22" height="22" viewBox="0 0 22 22"><path d="M1 11.8V10.2A8.8 8.8 0 0 1 18.6 10.2V15.5A3 3 0 0 1 15.6 18.5H9.5" fill="none" stroke="#9dbbec" stroke-width="1.9"/><rect x="3.3" y="7" width="4.4" height="6.8" rx="2" fill="#0a4ccf"/><rect x="12.5" y="7" width="4.7" height="6.8" rx="2" fill="#0a4ccf"/><rect x="7.3" y="17.2" width="4" height="2.8" rx="1.3" fill="#9dbbec"/></svg>
<svg class="a" style="left:1873px;top:25px" width="23" height="22" viewBox="0 0 23 22"><path d="M6.8 4.7A4.2 4.2 0 0 1 15.2 4.7Z" fill="#9dbbec"/><path d="M4.9 6.7H17.7V16.1Q17.7 19.1 14.7 19.1H7.9Q4.9 19.1 4.9 16.1Z" fill="#0a4ccf"/><rect x="10.2" y="9" width="2" height="10.2" fill="#fff"/><path d="M2.6 4.6L6 8M0.8 11.7H5M2.6 19.6L6 16.2M19.8 4.6L16.4 8M21.6 11.7H17.4M19.8 19.6L16.4 16.2" stroke="#0a4ccf" stroke-width="2.3" stroke-linecap="round"/></svg>

<!-- sidebar -->
<div id="sb">
 <svg class="a" style="left:0;top:0" width="60" height="70" viewBox="0 0 60 70"><path d="M29.1 21.2Q29.1 21.2 29.6 21.5L42.9 29.2Q44 29.9 44 31.2V44.6Q44 45.9 42.9 46.6L29.6 54.3Q29.1 54.6 28.6 54.3L15.3 46.6Q14.2 45.9 14.2 44.6V31.2Q14.2 29.9 15.3 29.2L28.6 21.5Q29.1 21.2 29.1 21.2Z" fill="#f1b53a" stroke="#fff" stroke-width="2.6" stroke-linejoin="round"/>
<circle cx="29.1" cy="31.8" r="3.1" fill="#1f4f96"/><path d="M27.6 29.5L27 27M30.6 29.5L31.2 27" stroke="#1f4f96" stroke-width="0.9"/>
<path d="M29.1 36.1C27 33.2 20.5 32.6 20.5 36.1C20.5 39.6 27 39 29.1 36.1C31.2 39 37.7 39.6 37.7 36.1C37.7 32.6 31.2 33.2 29.1 36.1Z" fill="none" stroke="#1f4f96" stroke-width="1.5"/>
<path d="M23 41Q29.1 44.8 35.4 41" fill="none" stroke="#1f4f96" stroke-width="2.6"/>
<path d="M24.8 45.3Q29.1 47.6 33.6 45.3" fill="none" stroke="#1f4f96" stroke-width="1.4"/>
<path d="M27.6 47.2L29.1 48.8L30.6 47.2Z" fill="#1f4f96"/></svg>
 <svg class="a" style="left:0;top:0" width="190" height="70" viewBox="0 0 190 70"><g fill="none" stroke="#fff" stroke-width="5" stroke-linecap="round" stroke-linejoin="round">
 <ellipse cx="65.2" cy="37.5" rx="8.3" ry="8.5"/><path d="M73.6 29.5V46"/>
 <path d="M92.2 31C90.6 29.3 88.5 29 86.3 29C82.6 29 80.6 30.8 80.6 33C80.6 35.8 83.4 36.6 86.4 37.3C89.6 38 92.3 39.2 92.3 42C92.3 44.6 90 46.2 86.2 46.2C83.6 46.2 81.6 45.5 80.3 43.8"/>
 <path d="M112.1 31C110.5 29.3 108.4 29 106.2 29C102.5 29 100.5 30.8 100.5 33C100.5 35.8 103.3 36.6 106.3 37.3C109.5 38 112.2 39.2 112.2 42C112.2 44.6 109.9 46.2 106.1 46.2C103.5 46.2 101.5 45.5 100.2 43.8"/>
 <path d="M120.3 29.2V38.3A7.25 7.9 0 0 0 134.8 38.3V29.2M134.8 38V46"/>
 <path d="M144.6 46V37.5C144.6 31.8 147.6 29 153.6 29"/>
 <path d="M159.6 37.8H174.3C174.3 32.5 171.2 29 166.9 29C162.4 29 159.4 32.6 159.4 37.5C159.4 42.6 162.6 46 167.2 46C170.2 46 172.3 44.8 173.6 43"/>
</g></svg>
 <svg class="a" style="left:202px;top:31px" width="25" height="14" viewBox="0 0 25 14"><rect x="1.3" y="0.8" width="3.2" height="12.2" fill="#fff"/><path d="M23.8 7H6.8M12.4 1.6L6.7 7L12.4 12.4" fill="none" stroke="#fff" stroke-width="2.3"/></svg>
 <div class="a" style="left:0;top:77px;width:248px;height:1px;background:#3b3c62"></div>

 <div class="nav" style="top:78px"><svg style="left:16px;top:17px" width="25" height="19" viewBox="0 0 25 19"><path d="M2.6 6.4A19 19 0 0 1 22.4 6.2" fill="none" stroke="#fff" stroke-width="3.1" stroke-linecap="round"/><path d="M6.8 10.2A14 14 0 0 1 17.6 10.2" fill="none" stroke="#fff" stroke-width="3.1" stroke-linecap="round"/><path d="M15.1 0.6L9.6 17.2H14.9Z" fill="#fff" stroke="#0a0a37" stroke-width="1.3" stroke-linejoin="round"/></svg><div class="t" style="top:16px">Dashboard</div></div>
 <div class="nav" style="top:130px;background:#0071bb"><svg style="left:17px;top:15px" width="22" height="22" viewBox="0 0 22 22"><path d="M10 0.6 A10.5 10.5 0 0 0 10 21.4 Z" fill="#fff"/><path d="M12 0.6 A10.5 10.5 0 0 1 21.4 10 H12 Z" fill="#fff"/><path d="M12 12 H21.4 A10.5 10.5 0 0 1 12 21.4 Z" fill="#fff"/></svg><div class="t" style="font-weight:bold;font-size:15.5px;top:14px">Reports</div></div>
 <div class="nav" style="top:182px"><svg style="left:17px;top:14px" width="22" height="22" viewBox="0 0 22 22"><path d="M11.1 0.9L21 6.2V19.8H0.9V6.2Z" fill="#fff" stroke="#fff" stroke-width="0.3" stroke-linejoin="round"/><path d="M11.1 3.4L18.7 7.3L11.1 12.6L3.4 7.3Z" fill="#0a0a37"/></svg><div class="t">Alerts</div></div>
 <div class="nav" style="top:234px"><svg style="left:18px;top:14px" width="20" height="23" viewBox="-0.2 -0.8 20.4 23.4"><path d="M10 0.5 L19.5 3.5 V11 C19.5 17 15 21 10 22.5 C5 21 0.5 17 0.5 11 V3.5 Z" fill="#fff"/><path d="M10 2.6 L2.6 5.1 V11 H10 Z M10 11 V20.2 C14 18.6 17.4 15.6 17.4 11 Z" fill="#0a0a37"/></svg><div class="t">Rules</div></div>
 <div class="nav" style="top:286px"><svg style="left:16px;top:6px" width="26" height="34" viewBox="0 0 26 34"><circle cx="11" cy="20.8" r="10.3" fill="#fff"/><rect x="14.3" y="7.6" width="10.5" height="12" fill="#0a0a37"/><rect x="15.7" y="12.1" width="7.6" height="6" rx="0.6" fill="#fff"/><path d="M17.3 12.4V11.2A2.2 2.2 0 0 1 21.7 11.2V12.4" fill="none" stroke="#fff" stroke-width="1.6"/><path d="M7.1 18.7H14.7V20.7H7.1Z M10.4 16H14.3V19.5H10.4Z M14.3 19.5H17.9V25H14.3Z" fill="#0a0a37"/><path d="M3.6 20.1L9.6 28" stroke="#0a0a37" stroke-width="1.4"/></svg><div class="t">Admin</div>
  <svg style="left:214px;top:22px" width="12" height="8" viewBox="0 0 12 8"><path d="M1 1.5L6 6.5L11 1.5" fill="none" stroke="#fff" stroke-width="2"/></svg></div>

 <div class="nav" style="top:791px"><svg style="left:17px;top:16px" width="22" height="22" viewBox="0 0 22 22"><circle cx="11" cy="10" r="10.2" fill="#fff"/><circle cx="11.1" cy="5.8" r="2.9" fill="#0a0a37"/><ellipse cx="11.1" cy="14" rx="5.75" ry="2.7" fill="#0a0a37"/></svg><div class="t" style="top:16px">Assure Admin</div></div>
 <div class="nav" style="top:831px"><svg style="left:18px;top:14px" width="21" height="24" viewBox="0 0 21 24"><path d="M6 8.2V5.9A4.3 4.3 0 0 1 14.6 5.9V6.8" fill="none" stroke="#fff" stroke-width="1.8"/><rect x="3" y="9" width="14.8" height="11.9" fill="none" stroke="#fff" stroke-width="2"/><circle cx="10.2" cy="15" r="1.9" fill="#fff"/></svg><div class="t" style="top:16px">Logout</div></div>
 <div class="nav" style="top:871px"><svg style="left:16px;top:18px" width="24" height="19" viewBox="0 0 24 19"><path d="M0.5 1.5 C4 0 8 0 11 1.5 V18 C8 16.5 4 16.5 0.5 18 Z" fill="#fff"/><path d="M13 1.5 C16 0 20 0 23.5 1.5 V18 C20 16.5 16 16.5 13 18 Z" fill="#fff"/><rect x="15" y="3" width="6.5" height="12" fill="#0a0a37"/></svg><div class="t" style="top:16px">Guide</div></div>

 <svg class="a" style="left:0;top:900px" width="248" height="73" viewBox="0 900 248 73">
<g fill="none" stroke="#fff" stroke-width="4.3" stroke-linecap="round" stroke-linejoin="round">
<path transform="translate(0 0)" d="M85 942C83.6 940.6 81.6 940.2 79 940.2C75.4 940.2 73 941.6 73 944C73 946.6 76 947.3 79 947.8C82.4 948.4 85 949.3 85 951.9C85 954 82.8 954.7 79 954.7C76.4 954.7 74.1 954.1 72.5 952.6"/><ellipse cx="98.3" cy="947.4" rx="6.1" ry="7.2"/><path d="M104.4 941V954.6"/><ellipse cx="118.1" cy="947.4" rx="6.5" ry="7.2"/><path d="M124.6 941V954.6"/><path transform="translate(58.7 0)" d="M85 942C83.6 940.6 81.6 940.2 79 940.2C75.4 940.2 73 941.6 73 944C73 946.6 76 947.3 79 947.8C82.4 948.4 85 949.3 85 951.9C85 954 82.8 954.7 79 954.7C76.4 954.7 74.1 954.1 72.5 952.6"/>
<path d="M148.7 940.4L154.6 953.6M159.9 940.4L151.6 961.2"/>
<ellipse cx="171.8" cy="947.4" rx="6.3" ry="7.2"/><path d="M178.1 941V954.6"/>
<path d="M185.3 954.6V946.5C185.3 942.2 188 940.2 191.8 940.2C195.6 940.2 198.3 942.2 198.3 946.5V954.6"/>
</g>
<g transform="translate(30 922)">
<path d="M19 8.6L18 6.4M23.4 8.6L24.4 6.4" stroke="#fff" stroke-width="1.4" stroke-linecap="round"/>
<circle cx="21.2" cy="13.2" r="4.9" fill="#fff"/>
<path d="M21.2 19.2C18 15.2 8.4 13.6 8.4 19.2C8.4 24.2 18 23.2 21.2 19.2C24.4 23.2 34 24.2 34 19.2C34 13.6 24.4 15.2 21.2 19.2Z" fill="none" stroke="#fff" stroke-width="2.3"/>
<path d="M11 23.2C11 31 15 36.5 21.2 38.4C27.4 36.5 31.4 31 31.4 23.2C28 25 24.5 25.3 21.2 23.4C17.9 25.3 14.4 25 11 23.2Z" fill="#fff"/>
<path d="M11.3 28.3Q21.2 31.8 31.1 28.3M13.2 33.4Q21.2 36.4 29.2 33.4" fill="none" stroke="#0a0a37" stroke-width="1.6"/>
<path d="M20 38L21.2 40.2L22.4 38Z" fill="#fff"/>
</g></svg>
</div>

</body></html>
